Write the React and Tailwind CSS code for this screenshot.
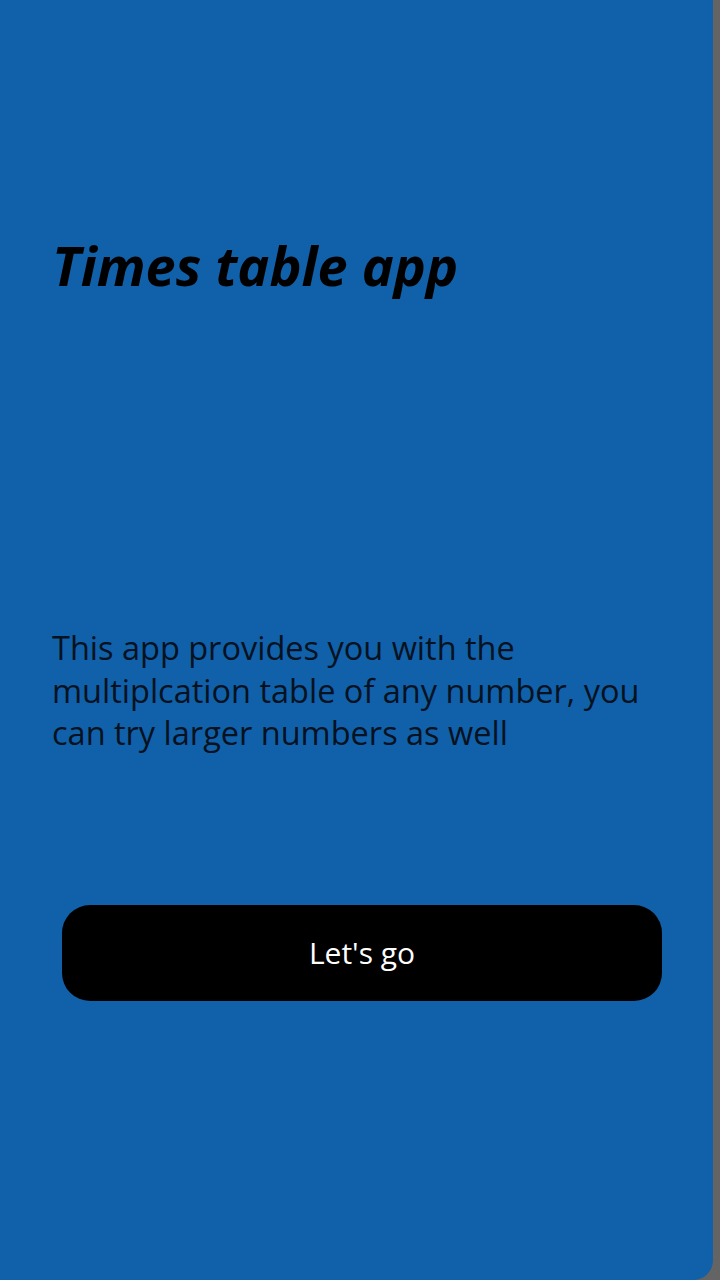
export default function App() {
  return (
    <div className="min-h-[1280px] w-[720px] bg-[#646464] flex" style={{ fontFamily: '"Open Sans", "Noto Sans", sans-serif' }}>
      <div className="w-[713px] min-h-[1280px] bg-[#1160aa] rounded-br-[20px] flex flex-col pl-[52px] pr-[50px]">
        <h1 className="mt-[232px] text-[54px] font-bold italic text-black leading-[66px]">
          Times table app
        </h1>
        <p className="mt-[329px] text-[32.5px] leading-[42.5px] text-[#061220]">
          This app provides you with the multiplcation table of any number, you can try larger numbers as well
        </p>
        <button className="mt-[150px] ml-[10px] w-[600px] h-[96px] bg-black rounded-[28px] text-white text-[30px]">
          Let's go
        </button>
      </div>
    </div>
  );
}
